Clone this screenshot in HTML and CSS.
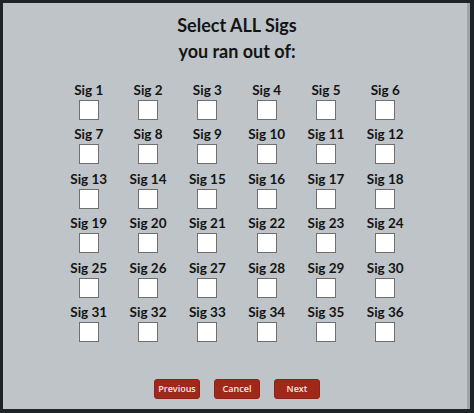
FILE: index.html
```html
<!DOCTYPE html>
<html>
<head>
<meta charset="utf-8">
<link rel="stylesheet" href="styles.css">
</head>
<body>
<div class="panel">
  <h1 class="title">Select ALL Sigs<br>you ran out of:</h1>
  <div class="grid">
    <label class="cell"><span>Sig 1</span><input type="checkbox" class="box"></label>
    <label class="cell"><span>Sig 2</span><input type="checkbox" class="box"></label>
    <label class="cell"><span>Sig 3</span><input type="checkbox" class="box"></label>
    <label class="cell"><span>Sig 4</span><input type="checkbox" class="box"></label>
    <label class="cell"><span>Sig 5</span><input type="checkbox" class="box"></label>
    <label class="cell"><span>Sig 6</span><input type="checkbox" class="box"></label>
    <label class="cell"><span>Sig 7</span><input type="checkbox" class="box"></label>
    <label class="cell"><span>Sig 8</span><input type="checkbox" class="box"></label>
    <label class="cell"><span>Sig 9</span><input type="checkbox" class="box"></label>
    <label class="cell"><span>Sig 10</span><input type="checkbox" class="box"></label>
    <label class="cell"><span>Sig 11</span><input type="checkbox" class="box"></label>
    <label class="cell"><span>Sig 12</span><input type="checkbox" class="box"></label>
    <label class="cell"><span>Sig 13</span><input type="checkbox" class="box"></label>
    <label class="cell"><span>Sig 14</span><input type="checkbox" class="box"></label>
    <label class="cell"><span>Sig 15</span><input type="checkbox" class="box"></label>
    <label class="cell"><span>Sig 16</span><input type="checkbox" class="box"></label>
    <label class="cell"><span>Sig 17</span><input type="checkbox" class="box"></label>
    <label class="cell"><span>Sig 18</span><input type="checkbox" class="box"></label>
    <label class="cell"><span>Sig 19</span><input type="checkbox" class="box"></label>
    <label class="cell"><span>Sig 20</span><input type="checkbox" class="box"></label>
    <label class="cell"><span>Sig 21</span><input type="checkbox" class="box"></label>
    <label class="cell"><span>Sig 22</span><input type="checkbox" class="box"></label>
    <label class="cell"><span>Sig 23</span><input type="checkbox" class="box"></label>
    <label class="cell"><span>Sig 24</span><input type="checkbox" class="box"></label>
    <label class="cell"><span>Sig 25</span><input type="checkbox" class="box"></label>
    <label class="cell"><span>Sig 26</span><input type="checkbox" class="box"></label>
    <label class="cell"><span>Sig 27</span><input type="checkbox" class="box"></label>
    <label class="cell"><span>Sig 28</span><input type="checkbox" class="box"></label>
    <label class="cell"><span>Sig 29</span><input type="checkbox" class="box"></label>
    <label class="cell"><span>Sig 30</span><input type="checkbox" class="box"></label>
    <label class="cell"><span>Sig 31</span><input type="checkbox" class="box"></label>
    <label class="cell"><span>Sig 32</span><input type="checkbox" class="box"></label>
    <label class="cell"><span>Sig 33</span><input type="checkbox" class="box"></label>
    <label class="cell"><span>Sig 34</span><input type="checkbox" class="box"></label>
    <label class="cell"><span>Sig 35</span><input type="checkbox" class="box"></label>
    <label class="cell"><span>Sig 36</span><input type="checkbox" class="box"></label>
  </div>
  <div class="actions">
    <button class="btn">Previous</button>
    <button class="btn">Cancel</button>
    <button class="btn">Next</button>
  </div>
</div>
</body>
</html>
```
FILE: styles.css
```css
html, body {
  margin: 0;
  padding: 0;
}
body {
  background: #1f2327;
  width: 474px;
  height: 413px;
  padding: 3px 4px 4px 3px;
  box-sizing: border-box;
  font-family: Lato, "Open Sans", sans-serif;
}
.panel {
  background: #bec4c8;
  height: 406px;
  box-sizing: border-box;
  padding-top: 9px;
  padding-left: 4px;
  border-right: 3px solid #9ea4a8;
  display: flex;
  flex-direction: column;
  align-items: center;
}
.title {
  margin: 0;
  font-size: 18px;
  line-height: 26px;
  font-weight: 700;
  color: #141414;
  text-align: center;
}
.grid {
  margin-top: 18px;
  display: grid;
  grid-template-columns: repeat(6, 59.3px);
  row-gap: 6.4px;
}
.cell {
  display: flex;
  flex-direction: column;
  align-items: center;
  gap: 2px;
}
.cell span {
  font-size: 13.5px;
  font-weight: 700;
  line-height: 16px;
  color: #141414;
}
.box {
  appearance: none;
  -webkit-appearance: none;
  margin: 0;
  width: 20px;
  height: 20px;
  box-sizing: border-box;
  background: #fff;
  border: 1px solid #6f6f6f;
}
.actions {
  margin-top: 37px;
  display: flex;
  gap: 14px;
}
.btn {
  width: 46px;
  height: 20px;
  padding: 0;
  border: 1px solid #8a2217;
  border-radius: 3px;
  background: #a0281b;
  color: #f3e6e4;
  font-family: "Open Sans", sans-serif;
  font-size: 9px;
  font-weight: 600;
}
```
